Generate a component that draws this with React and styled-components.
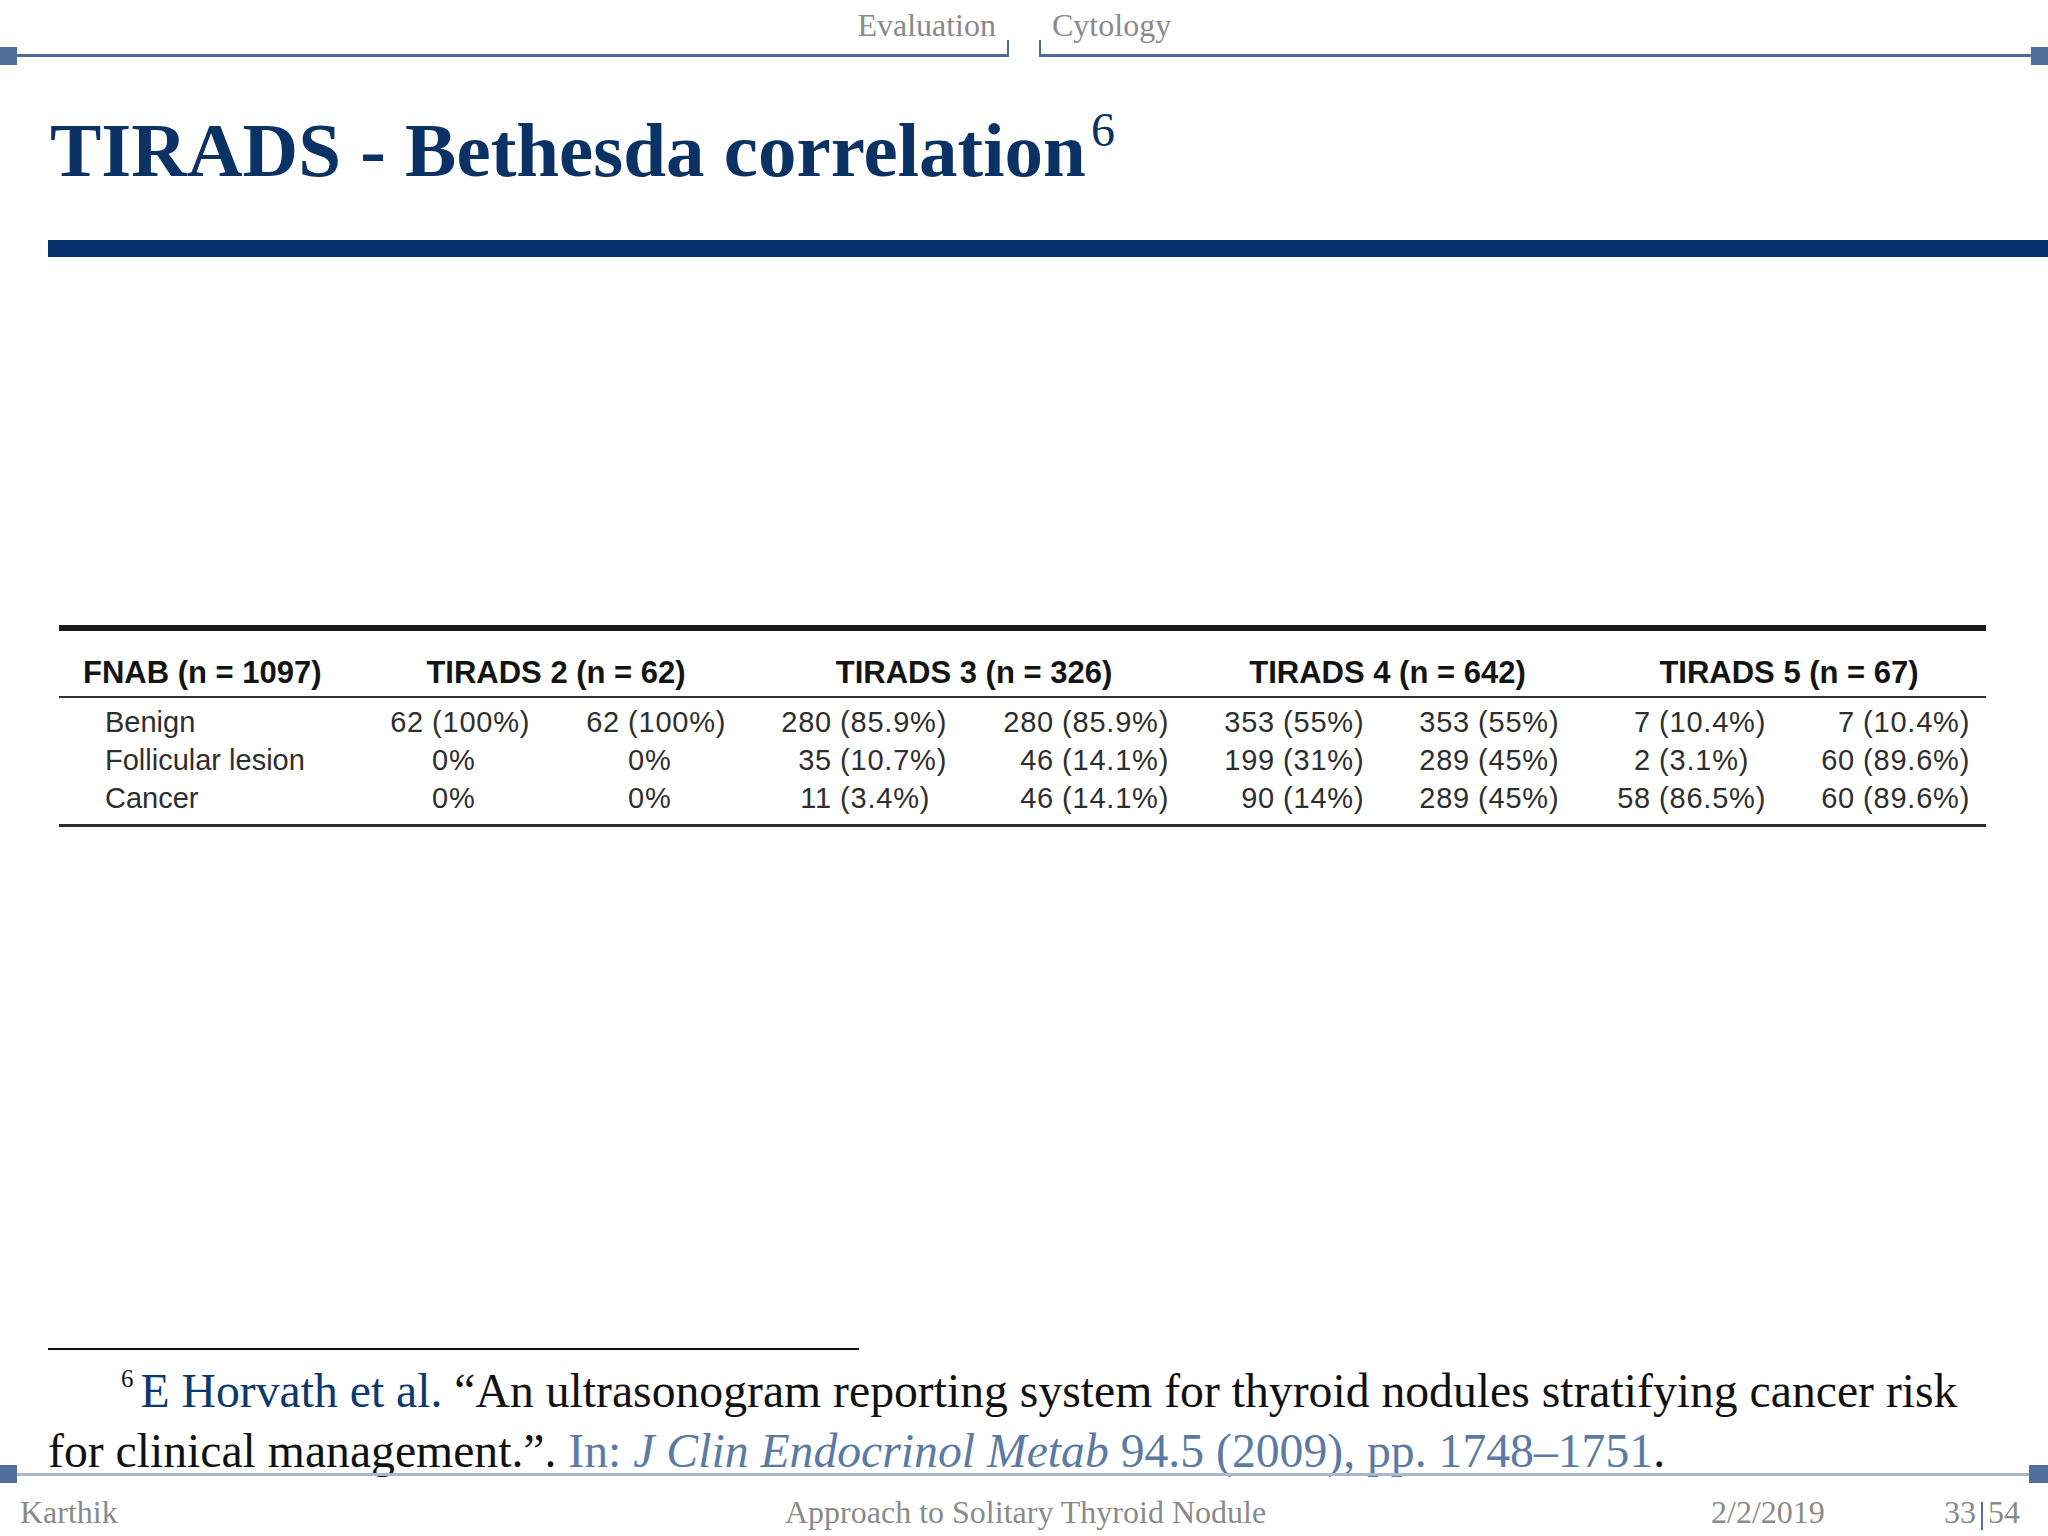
import React from "react";
import styled, { createGlobalStyle } from "styled-components";

const GlobalStyle = createGlobalStyle`
  html, body { margin: 0; padding: 0; background: #ffffff; }
  body { font-family: "Liberation Serif", "Times New Roman", serif; }
  #root { width: 2048px; }
`;

const NAV = "#4a6b97";

const Slide = styled.div`
  width: 2048px;
  height: 1536px;
  display: flex;
  flex-direction: column;
  overflow: hidden;
  background: #ffffff;
`;

/* ---------- top navigation ---------- */
const NavRow = styled.div`
  flex: 0 0 66px;
  display: flex;
  align-items: flex-start;
`;

const EndSquare = styled.div`
  flex: 0 0 ${(p) => p.$w || 17}px;
  height: 18px;
  margin-top: ${(p) => p.$top || 0}px;
  background: #4f6f9a;
`;

const NavSection = styled.div`
  display: flex;
  flex-direction: column;
  flex: ${(p) => (p.$side === "left" ? "0 0 992px" : "1 1 auto")};
`;

const NavLabel = styled.div`
  height: 40px;
  box-sizing: border-box;
  padding-top: 9px;
  ${(p) => (p.$side === "left" ? "padding-right: 13px;" : "padding-left: 13px;")}
  font-family: "Liberation Serif", "Times New Roman", serif;
  font-size: 32px;
  line-height: 1;
  color: #8a8a8a;
  text-align: ${(p) => (p.$side === "left" ? "right" : "left")};
  white-space: nowrap;
`;

const NavTick = styled.div`
  height: 14px;
  border-bottom: 3px solid ${NAV};
  ${(p) =>
    p.$side === "left"
      ? `border-right: 2px solid ${NAV};`
      : `border-left: 2px solid ${NAV};`}
`;

const NavGap = styled.div`
  flex: 0 0 30px;
`;

/* ---------- title ---------- */
const TitleRow = styled.div`
  flex: 0 0 174px;
  box-sizing: border-box;
  padding: 46px 0 0 50px;
`;

const Title = styled.h1`
  margin: 0;
  font-family: "Liberation Serif", "Times New Roman", serif;
  font-weight: 700;
  font-size: 77px;
  line-height: 1;
  color: #0b3264;
  white-space: nowrap;
`;

const TitleSup = styled.span`
  font-weight: 400;
  font-size: 48px;
  line-height: 0;
  vertical-align: 30px;
  margin-left: 5px;
`;

const TitleBar = styled.div`
  flex: 0 0 17px;
  margin-left: 48px;
  background: #05316a;
`;

/* ---------- content / table ---------- */
const Content = styled.div`
  flex: 1 1 auto;
  min-height: 0;
  box-sizing: border-box;
  padding-top: 368px;
`;

const Table = styled.div`
  margin-left: 59px;
  width: 1927px;
  border-top: 6px solid #1b1b1b;
  border-bottom: 3px solid #2b2b2b;
  font-family: "Liberation Sans", Arial, sans-serif;
`;

const HeaderRow = styled.div`
  display: grid;
  grid-template-columns: 288px 418px 418px 409px 394px;
  padding: 26px 0 8px;
  border-bottom: 2px solid #333333;
`;

const HeadCell = styled.div`
  font-weight: 700;
  font-size: 31px;
  line-height: 1;
  color: #141414;
  white-space: nowrap;
  text-align: ${(p) => (p.$first ? "left" : "center")};
  padding-left: ${(p) => (p.$first ? 24 : 0)}px;
`;

const Body = styled.div`
  padding: 5px 0 7px;
`;

const BodyRow = styled.div`
  display: grid;
  grid-template-columns: 303px 196px 212px 222px 221px 195px 181px 204px 193px;
  height: 38px;
  font-size: 29px;
  line-height: 38px;
  color: #2e2e2e;
  white-space: nowrap;
`;

const RowLabel = styled.div`
  padding-left: 46px;
`;

const DataCell = styled.div`
  display: flex;
  letter-spacing: 0.8px;
`;

const NumPart = styled.span`
  flex: 0 0 70px;
  box-sizing: border-box;
  padding-right: 8px;
  text-align: right;
`;

const ParenPart = styled.span`
  flex: 1 1 auto;
`;

/* ---------- footnote ---------- */
const Footnote = styled.div`
  flex: 0 0 117px;
  min-height: 0;
  box-sizing: border-box;
  padding-left: 48px;
`;

const FootRule = styled.div`
  width: 811px;
  height: 2px;
  background: #111111;
  margin-bottom: 11px;
`;

const FootLine = styled.div`
  font-family: "Liberation Serif", "Times New Roman", serif;
  font-size: 47.7px;
  line-height: 60px;
  color: #111111;
  white-space: nowrap;
  padding-left: ${(p) => p.$indent || 0}px;
`;

const FootSup = styled.span`
  font-size: 25px;
  line-height: 0;
  vertical-align: 20px;
  margin-right: 7px;
`;

const Author = styled.span`
  color: #0b3a6e;
`;

const Link = styled.span`
  color: #5b7ba4;
  font-style: ${(p) => (p.$italic ? "italic" : "normal")};
`;

/* ---------- footer ---------- */
const Footer = styled.div`
  flex: 0 0 71px;
  min-height: 0;
  display: flex;
  flex-direction: column;
`;

const FooterBar = styled.div`
  display: flex;
  align-items: center;
  height: 18px;
`;

const FooterLine = styled.div`
  flex: 1 1 auto;
  height: 3px;
  background: #a9b7cb;
`;

const FooterText = styled.div`
  display: flex;
  margin-top: 13px;
  font-family: "Liberation Serif", "Times New Roman", serif;
  font-size: 32px;
  line-height: 1;
  color: #8a8a8a;
  white-space: nowrap;
`;

const FootItem = styled.div`
  flex: 0 0 ${(p) => p.$w}px;
  box-sizing: border-box;
  padding-left: ${(p) => p.$pl || 0}px;
`;

const PageSep = styled.span`
  display: inline-block;
  width: 2px;
  height: 28px;
  margin: 0 5px;
  vertical-align: -7px;
  background: #4f6f9a;
`;

const rows = [
  ["Benign", ["62", "(100%)"], ["62", "(100%)"], ["280", "(85.9%)"], ["280", "(85.9%)"], ["353", "(55%)"], ["353", "(55%)"], ["7", "(10.4%)"], ["7", "(10.4%)"]],
  ["Follicular lesion", ["", "0%"], ["", "0%"], ["35", "(10.7%)"], ["46", "(14.1%)"], ["199", "(31%)"], ["289", "(45%)"], ["2", "(3.1%)"], ["60", "(89.6%)"]],
  ["Cancer", ["", "0%"], ["", "0%"], ["11", "(3.4%)"], ["46", "(14.1%)"], ["90", "(14%)"], ["289", "(45%)"], ["58", "(86.5%)"], ["60", "(89.6%)"]],
];

const headers = ["FNAB (n = 1097)", "TIRADS 2 (n = 62)", "TIRADS 3 (n = 326)", "TIRADS 4 (n = 642)", "TIRADS 5 (n = 67)"];

export default function App() {
  return (
    <>
      <GlobalStyle />
      <Slide>
        <NavRow>
          <EndSquare $top={47} />
          <NavSection $side="left">
            <NavLabel $side="left">Evaluation</NavLabel>
            <NavTick $side="left" />
          </NavSection>
          <NavGap />
          <NavSection $side="right">
            <NavLabel $side="right">Cytology</NavLabel>
            <NavTick $side="right" />
          </NavSection>
          <EndSquare $top={47} />
        </NavRow>

        <TitleRow>
          <Title>
            TIRADS - Bethesda correlation<TitleSup>6</TitleSup>
          </Title>
        </TitleRow>
        <TitleBar />

        <Content>
          <Table>
            <HeaderRow>
              {headers.map((h, i) => (
                <HeadCell key={h} $first={i === 0}>
                  {h}
                </HeadCell>
              ))}
            </HeaderRow>
            <Body>
              {rows.map((r) => (
                <BodyRow key={r[0]}>
                  <RowLabel>{r[0]}</RowLabel>
                  {r.slice(1).map((c, j) => (
                    <DataCell key={j}>
                      <NumPart>{c[0]}</NumPart>
                      <ParenPart>{c[1]}</ParenPart>
                    </DataCell>
                  ))}
                </BodyRow>
              ))}
            </Body>
          </Table>
        </Content>

        <Footnote>
          <FootRule />
          <FootLine $indent={73}>
            <FootSup>6</FootSup>
            <Author>E Horvath et al.</Author> “An ultrasonogram reporting system for thyroid nodules stratifying cancer risk
          </FootLine>
          <FootLine>
            for clinical management.”. <Link>In: </Link>
            <Link $italic>J Clin Endocrinol Metab</Link>
            <Link> 94.5 (2009), pp. 1748–1751</Link>.
          </FootLine>
        </Footnote>

        <Footer>
          <FooterBar>
            <EndSquare />
            <FooterLine />
            <EndSquare $w={19} />
          </FooterBar>
          <FooterText>
            <FootItem $w={785} $pl={20}>Karthik</FootItem>
            <FootItem $w={926}>Approach to Solitary Thyroid Nodule</FootItem>
            <FootItem $w={233}>2/2/2019</FootItem>
            <FootItem $w={104}>
              33<PageSep />54
            </FootItem>
          </FooterText>
        </Footer>
      </Slide>
    </>
  );
}
